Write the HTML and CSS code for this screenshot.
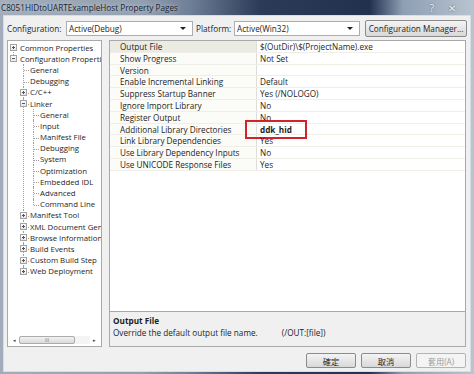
FILE: index.html
```html
<!DOCTYPE html>
<html lang="en">
<head>
    <meta charset="UTF-8">
    <title>C8051HIDtoUARTExampleHost Property Pages</title>
    <link rel="stylesheet" href="styles.css">
</head>
<body>
<div class="window">
    <div class="titlebar">
        <span class="title">C8051HIDtoUARTExampleHost Property Pages</span>
        <span class="caption-btn">?</span>
        <span class="caption-btn">✕</span>
    </div>

    <div class="client">
        <div class="config-row">
            <span class="label label-config">Configuration:</span>
            <div class="combo combo-config">Active(Debug)<span class="arrow"></span></div>
            <span class="label label-platform">Platform:</span>
            <div class="combo combo-platform">Active(Win32)<span class="arrow"></span></div>
            <button class="btn btn-manager">Configuration Manager...</button>
        </div>

        <div class="main">
            <div class="tree-panel">
                <ul class="tree">
                    <li><div class="node"><span class="exp plus"></span>Common Properties</div></li>
                    <li><div class="node"><span class="exp minus"></span>Configuration Properti</div>
                        <ul>
                            <li><div class="node">General</div></li>
                            <li><div class="node">Debugging</div></li>
                            <li><div class="node"><span class="exp plus"></span>C/C++</div></li>
                            <li><div class="node"><span class="exp minus"></span>Linker</div>
                                <ul>
                                    <li><div class="node selected">General</div></li>
                                    <li><div class="node">Input</div></li>
                                    <li><div class="node">Manifest File</div></li>
                                    <li><div class="node">Debugging</div></li>
                                    <li><div class="node">System</div></li>
                                    <li><div class="node">Optimization</div></li>
                                    <li><div class="node">Embedded IDL</div></li>
                                    <li><div class="node">Advanced</div></li>
                                    <li><div class="node">Command Line</div></li>
                                </ul>
                            </li>
                            <li><div class="node"><span class="exp plus"></span>Manifest Tool</div></li>
                            <li><div class="node"><span class="exp plus"></span>XML Document Gen</div></li>
                            <li><div class="node"><span class="exp plus"></span>Browse Information</div></li>
                            <li><div class="node"><span class="exp plus"></span>Build Events</div></li>
                            <li><div class="node"><span class="exp plus"></span>Custom Build Step</div></li>
                            <li><div class="node"><span class="exp plus"></span>Web Deployment</div></li>
                        </ul>
                    </li>
                </ul>

                <div class="hscroll">
                    <span class="sb-arrow">&#9666;</span>
                    <div class="sb-track"><div class="sb-thumb">III</div></div>
                    <span class="sb-arrow">&#9656;</span>
                </div>
            </div>

            <div class="right-col">
                <div class="grid">
                    <div class="prop current"><span class="name">Output File</span><span class="value">$(OutDir)\$(ProjectName).exe</span></div>
                    <div class="prop"><span class="name">Show Progress</span><span class="value">Not Set</span></div>
                    <div class="prop"><span class="name">Version</span><span class="value"></span></div>
                    <div class="prop"><span class="name">Enable Incremental Linking</span><span class="value">Default</span></div>
                    <div class="prop"><span class="name">Suppress Startup Banner</span><span class="value">Yes (/NOLOGO)</span></div>
                    <div class="prop"><span class="name">Ignore Import Library</span><span class="value">No</span></div>
                    <div class="prop"><span class="name">Register Output</span><span class="value">No</span></div>
                    <div class="prop"><span class="name">Additional Library Directories</span><span class="value bold">ddk_hid<span class="mark"></span></span></div>
                    <div class="prop"><span class="name">Link Library Dependencies</span><span class="value">Yes</span></div>
                    <div class="prop"><span class="name">Use Library Dependency Inputs</span><span class="value">No</span></div>
                    <div class="prop"><span class="name">Use UNICODE Response Files</span><span class="value">Yes</span></div>
                </div>
                <div class="desc">
                    <div class="desc-title">Output File</div>
                    <div class="desc-text">Override the default output file name.<span class="switch">(/OUT:[file])</span></div>
                </div>
            </div>
        </div>

        <div class="button-row">
            <button class="btn btn-dialog">確定</button>
            <button class="btn btn-dialog">取消</button>
            <button class="btn btn-dialog disabled">套用(A)</button>
        </div>
    </div>
</div>
</body>
</html>
```

FILE: styles.css
```css
body {
    margin: 0;
    padding: 0;
    width: 474px;
    height: 374px;
    overflow: hidden;
    font-family: "Open Sans", "Noto Sans CJK TC", sans-serif;
    font-size: 8.2px;
    color: #1e1e1e;
}

.window {
    display: flex;
    flex-direction: column;
    height: 374px;
    background: linear-gradient(to right, #a2adbb 0%, #929fb0 30%, #6f7f97 40%, #2b3b58 55%, #22314e 78%, #8e9eb3 85%, #b9c4d1 100%);
}

/* title bar */
.titlebar {
    height: 15px;
    display: flex;
    align-items: center;
    padding-left: 1px;
    padding-right: 12px;
}

.title {
    flex: 1;
    font-size: 8.2px;
    color: #1b2330;
    text-shadow: 0 0 4px #d8dee6;
}

.caption-btn {
    width: 20px;
    text-align: center;
    color: #eef2f7;
    font-size: 10px;
    text-shadow: 0 0 2px #44556e;
}

/* client area */
.client {
    flex: 1;
    display: flex;
    flex-direction: column;
    margin: 0 3px 2px 3px;
    padding: 4px 3px 0 3px;
    background: #f0f0f0;
    border: 1px solid #d7dde5;
}

.config-row {
    display: flex;
    align-items: center;
    height: 17px;
}

.label {
    white-space: nowrap;
}

.label-config {
    width: 59px;
}

.label-platform {
    width: 38px;
    margin-left: 3px;
}

.combo {
    position: relative;
    height: 15px;
    box-sizing: border-box;
    border: 1px solid #abadb3;
    background: #fff;
    padding-left: 2px;
    line-height: 13px;
}

.combo-config {
    width: 127px;
}

.combo-platform {
    width: 126px;
}

.arrow {
    position: absolute;
    right: 6px;
    top: 5px;
    border-left: 3px solid transparent;
    border-right: 3px solid transparent;
    border-top: 3px solid #222;
}

.btn {
    font-family: "Open Sans", "Noto Sans CJK TC", sans-serif;
    font-size: 8.2px;
    color: #1e1e1e;
    background: linear-gradient(#f4f4f4, #e6e6e6 50%, #d8d8d8);
    border: 1px solid #8b8b8b;
    border-radius: 2px;
    padding: 0;
    box-sizing: border-box;
}

.btn-manager {
    width: 102px;
    height: 17px;
    margin-left: 5px;
}

/* main area */
.main {
    display: flex;
    gap: 7px;
    margin-top: 3px;
    height: 307px;
}

.tree-panel {
    width: 95px;
    flex: none;
    box-sizing: border-box;
    border: 1px solid #a9a9a9;
    background: #fff;
    display: flex;
    flex-direction: column;
    overflow: hidden;
    font-size: 7.8px;
}

.tree, .tree ul {
    list-style: none;
    margin: 0;
    padding: 0;
}

.tree {
    padding: 1px 0 0 2px;
}

.tree ul {
    padding-left: 10px;
}

.tree li {
    position: relative;
    white-space: nowrap;
}

.tree ul > li::before {
    content: '';
    position: absolute;
    left: 3px;
    top: 0;
    height: 100%;
    border-left: 1px dotted #a0a0a0;
}

.tree ul > li:last-child::before {
    height: 6px;
}

.tree ul > li::after {
    content: '';
    position: absolute;
    left: 4px;
    top: 6px;
    width: 5px;
    border-top: 1px dotted #a0a0a0;
}

.tree > li:first-child::before {
    content: '';
    position: absolute;
    left: 3px;
    top: 6px;
    height: 11px;
    border-left: 1px dotted #a0a0a0;
}

.node {
    position: relative;
    z-index: 1;
    display: flex;
    align-items: center;
    height: 11.2px;
    padding-left: 10px;
}

.exp {
    position: relative;
    flex: none;
    width: 7px;
    height: 7px;
    box-sizing: border-box;
    border: 1px solid #a3a3a3;
    background: linear-gradient(#fff, #e6e6e6);
    margin-left: -10px;
    margin-right: 3px;
}

.exp::before {
    content: '';
    position: absolute;
    left: 1px;
    top: 2px;
    width: 3px;
    height: 1px;
    background: #555;
}

.exp.plus::after {
    content: '';
    position: absolute;
    left: 2px;
    top: 1px;
    width: 1px;
    height: 3px;
    background: #555;
}

.hscroll {
    margin-top: auto;
    margin-bottom: 1px;
    display: flex;
    align-items: center;
    height: 10px;
    padding: 0 2px;
    font-size: 5px;
    color: #444;
}

.sb-arrow {
    width: 9px;
    text-align: center;
}

.sb-track {
    flex: 1;
    height: 8px;
    background: #f4f4f4;
}

.sb-thumb {
    width: 56px;
    height: 8px;
    box-sizing: border-box;
    border: 1px solid #acacac;
    border-radius: 2px;
    background: linear-gradient(#f2f2f2, #dadada);
    text-align: center;
    line-height: 6px;
    font-size: 5px;
    color: #777;
}

/* property grid */
.right-col {
    flex: 1;
    display: flex;
    flex-direction: column;
    border: 1px solid #a9a9a9;
    margin-right: 1px;
}

.grid {
    flex: 1;
    background: #fff;
}

.prop {
    display: flex;
    height: 11.8px;
    line-height: 11px;
    box-sizing: border-box;
    border-bottom: 1px solid #efefe8;
}

.prop .name {
    width: 136px;
    padding-left: 10px;
    background: #fbfbf8;
    border-right: 1px solid #dddddd;
    white-space: nowrap;
}

.prop.current .name {
    background: #ebebe4;
}

.prop .value {
    position: relative;
    flex: 1;
    padding-left: 3px;
    white-space: nowrap;
}

.value.bold {
    font-weight: bold;
}

.mark {
    position: absolute;
    left: -12px;
    top: -4px;
    width: 62px;
    height: 19px;
    box-sizing: border-box;
    border: 2px solid #d2232a;
}

.desc {
    height: 35px;
    box-sizing: border-box;
    border-top: 1px solid #a9a9a9;
    background: #f0f0f0;
    padding: 3px 0 0 3px;
    line-height: 11.5px;
}

.desc-title {
    font-weight: bold;
}

.switch {
    margin-left: 24px;
}

/* dialog buttons */
.button-row {
    display: flex;
    justify-content: flex-end;
    gap: 5px;
    margin-top: 6px;
    padding-right: 1px;
}

.btn-dialog {
    width: 50px;
    height: 15px;
}

.btn-dialog.disabled {
    color: #9c9c9c;
    border-color: #b2b5b8;
    background: #f4f4f4;
}
```
